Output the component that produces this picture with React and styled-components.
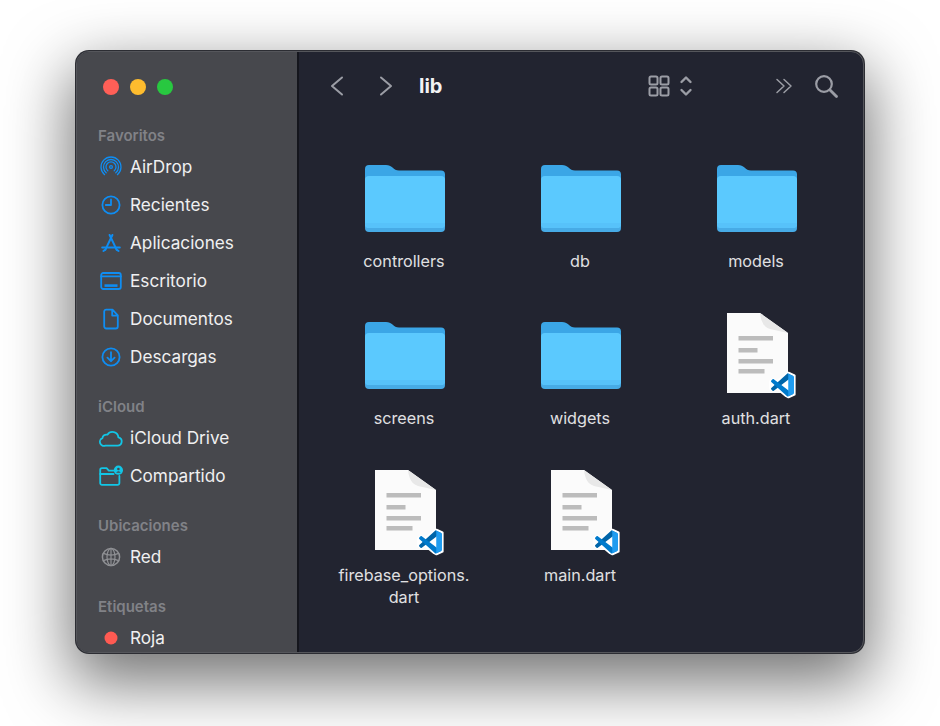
import React from 'react';
import styled, { createGlobalStyle } from 'styled-components';

const GlobalStyle = createGlobalStyle`
    html, body {
        margin: 0;
        height: 100%;
        overflow: hidden;
        background: #fff;
    }

    body {
        font-family: Inter, "Liberation Sans", sans-serif;
        -webkit-font-smoothing: antialiased;
    }
`;

const Page = styled.div`
    display: flex;
    justify-content: center;
    padding-top: 51px;
`;

const Window = styled.div`
    display: flex;
    box-sizing: border-box;
    width: 788px;
    height: 602px;
    border-radius: 13px;
    overflow: hidden;
    background: #222430;
    border: 1px solid #55565b;
    box-shadow: 0 0 0 1px #2c2d33, 0 24px 64px 6px rgba(0, 0, 0, 0.55);
`;

const Sidebar = styled.aside`
    box-sizing: border-box;
    flex: 0 0 222px;
    padding: 27px 0 0 21px;
    background: #47484d;
    border-right: 2px solid #15161d;
    overflow: hidden;
`;

const TrafficLights = styled.div`
    display: flex;
    gap: 11px;
    margin: 0 0 27px 5px;
`;

const Light = styled.span`
    width: 16px;
    height: 16px;
    border-radius: 50%;
    background: ${(props) => props.color};
`;

const Section = styled.section`
    margin-bottom: 17px;
`;

const SectionTitle = styled.h2`
    margin: 0;
    height: 26px;
    font-size: 15px;
    font-weight: 600;
    line-height: 28px;
    color: #818287;
`;

const Item = styled.div`
    display: flex;
    align-items: center;
    gap: 6px;
    height: 38px;
    font-size: 17.2px;
    color: #f0f0f1;
`;

const ItemName = styled.span`
    margin-bottom: 1px;
`;

const ItemIcon = styled.svg`
    flex: 0 0 26px;
    width: 26px;
    height: 26px;
    fill: none;
    stroke: ${(props) => props.tint};
    stroke-width: 1.8;
    stroke-linecap: round;
    stroke-linejoin: round;
`;

const Main = styled.main`
    flex: 1;
    min-width: 0;
`;

const Toolbar = styled.header`
    display: flex;
    align-items: center;
    height: 68px;
    padding: 0 24px 0 28px;
`;

const ToolIcon = styled.svg`
    display: block;
    flex: none;
    fill: none;
    stroke: #9b9da5;
    stroke-width: 2;
    stroke-linecap: round;
    stroke-linejoin: round;
`;

const ToolButton = styled.div`
    display: flex;
    margin-left: ${(props) => props.gap || 0}px;
`;

const Title = styled.h1`
    margin: 0 0 0 23px;
    font-size: 20px;
    font-weight: 700;
    color: #f2f2f3;
`;

const Spacer = styled.div`
    flex: 1;
`;

const Grid = styled.div`
    display: grid;
    grid-template-columns: repeat(3, 176px);
    grid-auto-rows: 157px;
    padding: 36px 0 0 17px;
`;

const Cell = styled.div`
    display: flex;
    flex-direction: column;
    align-items: center;
`;

const FileIcon = styled.svg`
    display: block;
    flex: none;
    width: 82px;
    height: 90px;
`;

const Label = styled.div`
    margin-top: 4px;
    font-size: 16.2px;
    line-height: 22px;
    color: #e0e0e2;
    text-align: center;
    white-space: pre-line;
`;

const sidebarIcons = {
    airdrop: (
        <g strokeWidth="1.300">
            <circle cx="13" cy="13" r="1.400" />
            <path d="M9.800 16.800a5 5 0 1 1 6.400 0" />
            <path d="M8.200 18.750a7.500 7.500 0 1 1 9.600 0" />
            <path d="M6.600 20.660a10 10 0 1 1 12.800 0" />
        </g>
    ),
    clock: (
        <>
            <circle cx="13" cy="13" r="8.600" />
            <path d="M13 7.500V13H7.800" />
        </>
    ),
    apps: (
        <g strokeWidth="2">
            <path d="M14.400 5 7.400 19.600" />
            <path d="M11.600 5 18.600 19.600" />
            <path d="M4.200 17.400h17.600" />
            <path d="M5.400 21l2-1.400M20.600 21l-2-1.400" />
        </g>
    ),
    desktop: (
        <>
            <rect x="3.200" y="5" width="19.600" height="16" rx="2" />
            <path d="M3.200 8.400h19.600" />
            <path d="M6.500 17.600h13" strokeWidth="2.600" strokeLinecap="butt" />
        </>
    ),
    document: (
        <path d="M6.200 5.600A2 2 0 0 1 8.200 3.600h6.300l5.300 5.700v11.200a2 2 0 0 1-2 2H8.200a2 2 0 0 1-2-2ZM14.200 3.800v5.800h5.400" />
    ),
    download: (
        <>
            <circle cx="13" cy="13" r="8.600" />
            <path d="M13 8.200v9M9.400 13.600l3.600 3.600 3.600-3.600" />
        </>
    ),
    cloud: (
        <path d="M7.400 20.600h12a4.200 4.200 0 0 0 1-8.300 6 6 0 0 0-11-2.600 4 4 0 0 0-5 3.500 3.800 3.800 0 0 0 3 7.400Z" />
    ),
    shared: (
        <>
            <path d="M18.500 7.600H10.800L8.600 5.200H4a1.800 1.800 0 0 0-1.800 1.800v13a1.800 1.800 0 0 0 1.800 1.800h15.600a1.800 1.800 0 0 0 1.800-1.800V13" />
            <path d="M2.200 11h13.400" />
            <circle cx="20.400" cy="7.200" r="4.600" fill="#12c6e6" stroke="none" />
            <circle cx="20.400" cy="6" r="1.300" fill="#47484d" stroke="none" />
            <path d="M18.200 9.800a2.300 2.300 0 0 1 4.400 0Z" fill="#47484d" stroke="none" />
        </>
    ),
    globe: (
        <g strokeWidth="1.200">
            <circle cx="13" cy="13" r="8.600" strokeWidth="1.500" />
            <ellipse cx="13" cy="13" rx="4" ry="8.600" />
            <path d="M5.400 9.400c4.500 2 10.700 2 15.200 0M5.400 16.600c4.500-2 10.700-2 15.200 0M13 4.400v17.200" />
        </g>
    ),
};

const sections = [
    {
        title: 'Favoritos',
        items: [
            { name: 'AirDrop', icon: 'airdrop', tint: '#0f8df2' },
            { name: 'Recientes', icon: 'clock', tint: '#0f8df2' },
            { name: 'Aplicaciones', icon: 'apps', tint: '#0f8df2' },
            { name: 'Escritorio', icon: 'desktop', tint: '#0f8df2' },
            { name: 'Documentos', icon: 'document', tint: '#0f8df2' },
            { name: 'Descargas', icon: 'download', tint: '#0f8df2' },
        ],
    },
    {
        title: 'iCloud',
        items: [
            { name: 'iCloud Drive', icon: 'cloud', tint: '#12c6e6' },
            { name: 'Compartido', icon: 'shared', tint: '#12c6e6' },
        ],
    },
    {
        title: 'Ubicaciones',
        items: [{ name: 'Red', icon: 'globe', tint: '#8f9094' }],
    },
    {
        title: 'Etiquetas',
        items: [{ name: 'Roja', tag: '#ff5a52' }],
    },
];

const files = [
    { name: 'controllers', kind: 'folder' },
    { name: 'db', kind: 'folder' },
    { name: 'models', kind: 'folder' },
    { name: 'screens', kind: 'folder' },
    { name: 'widgets', kind: 'folder' },
    { name: 'auth.dart', kind: 'dart' },
    { name: 'firebase_options.\ndart', kind: 'dart' },
    { name: 'main.dart', kind: 'dart' },
];

function FolderIcon() {
    return (
        <FileIcon viewBox="0 0 82 90">
            <path
                d="M2 13a4 4 0 0 1 4-4h17c3 0 4.500 1 6.500 2.500 2 1.800 3.500 3 6.500 3h42a4 4 0 0 1 4 4V60H2Z"
                fill="#3ba6e6"
            />
            <rect x="2" y="20" width="80" height="56" rx="4" fill="#47abe6" />
            <path
                d="M2 24a4 4 0 0 1 4-4h72a4 4 0 0 1 4 4v44a4 4 0 0 1-4 4H6a4 4 0 0 1-4-4Z"
                fill="#5bc9fe"
            />
            <path d="M2 67h80v1a4 4 0 0 1-4 4H6a4 4 0 0 1-4-4Z" fill="#57c2fa" />
        </FileIcon>
    );
}

function DartIcon() {
    return (
        <FileIcon viewBox="0 0 82 90">
            <path d="M12 0h33l28 20v60H12Z" fill="#fbfbfb" />
            <path d="M45 0c1 9 4 14 10 16l18 4Z" fill="#e8e8e8" />
            <g fill="#bcbcbc">
                <rect x="23.500" y="23" width="34.500" height="4.500" />
                <rect x="23.500" y="35" width="19" height="4.500" />
                <rect x="23.500" y="46" width="34.500" height="4.500" />
                <rect x="23.500" y="56" width="26" height="4.500" />
            </g>
            <g transform="translate(56 60.500) scale(0.23)">
                <path
                    d="M75.900 -3 102 9v82L75.900 103 66 98 24 64 11 75-3 66V34L11 25 24 36 66 2Z"
                    fill="#fff"
                    stroke="#fff"
                    strokeWidth="10"
                    strokeLinejoin="round"
                />
                <path
                    d="M96.4614 10.7962L75.8569 0.875542C73.4719 -0.272773 70.6217 0.211611 68.75 2.08333L1.29858 63.5832C-0.515693 65.2373 -0.513607 68.0937 1.30308 69.7452L6.81272 74.754C8.29793 76.1042 10.5347 76.2036 12.1338 74.9905L93.3609 13.3699C96.086 11.3026 100 13.2462 100 16.6667V16.4275C100 14.0265 98.6246 11.8378 96.4614 10.7962Z"
                    fill="#0065a9"
                />
                <path
                    d="M96.4614 89.2038L75.8569 99.1245C73.4719 100.273 70.6217 99.7884 68.75 97.9167L1.29858 36.4168C-0.515693 34.7627 -0.513607 31.9063 1.30308 30.2548L6.81272 25.246C8.29793 23.8958 10.5347 23.7964 12.1338 25.0095L93.3609 86.6301C96.086 88.6974 100 86.7538 100 83.3333V83.5725C100 85.9735 98.6246 88.1622 96.4614 89.2038Z"
                    fill="#007acc"
                />
                <path
                    d="M75.8578 99.1263C73.4721 100.274 70.6219 99.7885 68.75 97.9166C71.0564 100.223 75 98.5895 75 95.3278V4.67213C75 1.41039 71.0564 -0.223106 68.75 2.08329C70.6219 0.211402 73.4721 -0.273666 75.8578 0.873633L96.4587 10.7807C98.6234 11.8217 100 14.0112 100 16.4132V83.5871C100 85.9891 98.6234 88.1786 96.4586 89.2196L75.8578 99.1263Z"
                    fill="#1f9cf0"
                />
            </g>
        </FileIcon>
    );
}

function SidebarItem({ item }) {
    return (
        <Item>
            <ItemIcon viewBox="0 0 26 26" tint={item.tint}>
                {item.tag ? (
                    <circle cx="13" cy="13" r="6.500" fill={item.tag} stroke="none" />
                ) : (
                    sidebarIcons[item.icon]
                )}
            </ItemIcon>
            <ItemName>{item.name}</ItemName>
        </Item>
    );
}

export default function App() {
    return (
        <>
            <GlobalStyle />
            <Page>
                <Window>
                    <Sidebar>
                        <TrafficLights>
                            <Light color="#ff5f57" />
                            <Light color="#febc2e" />
                            <Light color="#28c840" />
                        </TrafficLights>
                        {sections.map((section) => (
                            <Section key={section.title}>
                                <SectionTitle>{section.title}</SectionTitle>
                                {section.items.map((item) => (
                                    <SidebarItem key={item.name} item={item} />
                                ))}
                            </Section>
                        ))}
                    </Sidebar>
                    <Main>
                        <Toolbar>
                            <ToolIcon width="20" height="24" viewBox="0 0 20 24">
                                <path d="M15 3.500 5 12l10 8.500" />
                            </ToolIcon>
                            <ToolButton gap={29}>
                                <ToolIcon width="20" height="24" viewBox="0 0 20 24">
                                    <path d="M5 3.500 15 12 5 20.500" />
                                </ToolIcon>
                            </ToolButton>
                            <Title>lib</Title>
                            <Spacer />
                            <ToolIcon width="24" height="24" viewBox="0 0 24 24">
                                <rect x="2.500" y="2.500" width="8" height="8" rx="1.500" />
                                <rect x="13.500" y="2.500" width="8" height="8" rx="1.500" />
                                <rect x="2.500" y="13.500" width="8" height="8" rx="1.500" />
                                <rect x="13.500" y="13.500" width="8" height="8" rx="1.500" />
                            </ToolIcon>
                            <ToolButton gap={8}>
                                <ToolIcon width="14" height="24" viewBox="0 0 14 24">
                                    <path d="M2.500 8 7 3.500 11.500 8M2.500 16 7 20.500 11.500 16" strokeWidth="2.400" />
                                </ToolIcon>
                            </ToolButton>
                            <ToolButton gap={82}>
                                <ToolIcon width="20" height="24" viewBox="0 0 20 24">
                                    <path d="M2 5.500 9 12l-7 6.500M9 5.500l7 6.500-7 6.500" strokeWidth="1.500" />
                                </ToolIcon>
                            </ToolButton>
                            <ToolButton gap={18}>
                                <ToolIcon width="26" height="26" viewBox="0 0 26 26">
                                    <circle cx="11" cy="11" r="7.800" strokeWidth="2.200" />
                                    <path d="m17 17 6.500 6.500" strokeWidth="2.800" />
                                </ToolIcon>
                            </ToolButton>
                        </Toolbar>
                        <Grid>
                            {files.map((file) => (
                                <Cell key={file.name}>
                                    {file.kind === 'folder' ? <FolderIcon /> : <DartIcon />}
                                    <Label>{file.name}</Label>
                                </Cell>
                            ))}
                        </Grid>
                    </Main>
                </Window>
            </Page>
        </>
    );
}
